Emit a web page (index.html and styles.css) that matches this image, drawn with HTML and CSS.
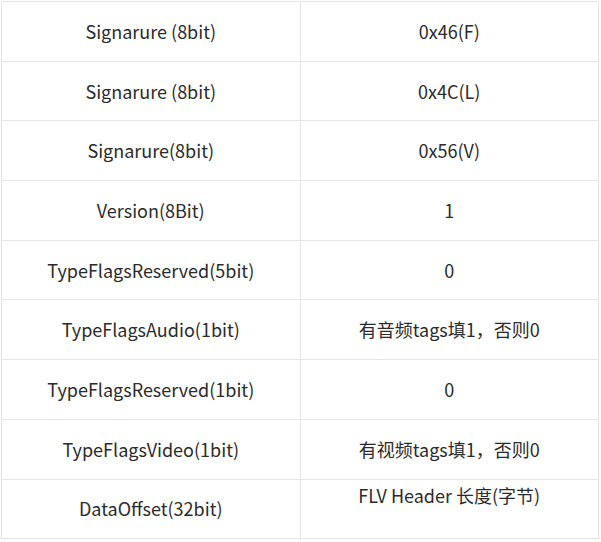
FILE: index.html
```html
<!DOCTYPE html>
<html lang="zh">
<head>
<meta charset="utf-8">
<link rel="stylesheet" href="styles.css">
</head>
<body>
<table class="tbl">
  <tr><td>Signarure (8bit)</td><td>0x46(F)</td></tr>
  <tr><td>Signarure (8bit)</td><td>0x4C(L)</td></tr>
  <tr><td>Signarure(8bit)</td><td>0x56(V)</td></tr>
  <tr><td>Version(8Bit)</td><td>1</td></tr>
  <tr><td>TypeFlagsReserved(5bit)</td><td>0</td></tr>
  <tr><td>TypeFlagsAudio(1bit)</td><td>有音频tags填1，否则0</td></tr>
  <tr><td>TypeFlagsReserved(1bit)</td><td>0</td></tr>
  <tr><td>TypeFlagsVideo(1bit)</td><td>有视频tags填1，否则0</td></tr>
  <tr><td>DataOffset(32bit)</td><td>FLV Header 长度(字节)<br>&nbsp;</td></tr>
</table>
</body>
</html>
```
FILE: styles.css
```css
html, body {
  margin: 0;
  padding: 0;
  background: #fff;
}
body {
  padding: 1px 0 0 1px;
}
.tbl {
  border-collapse: collapse;
  width: 598px;
  table-layout: fixed;
  font-family: "Noto Sans CJK SC", "Noto Sans", sans-serif;
  font-size: 18px;
  color: #2b2b2b;
}
.tbl td {
  border: 1px solid #e3e5e7;
  height: 58.7px;
  padding: 0 8px;
  text-align: center;
  vertical-align: middle;
  line-height: 27px;
}
```
